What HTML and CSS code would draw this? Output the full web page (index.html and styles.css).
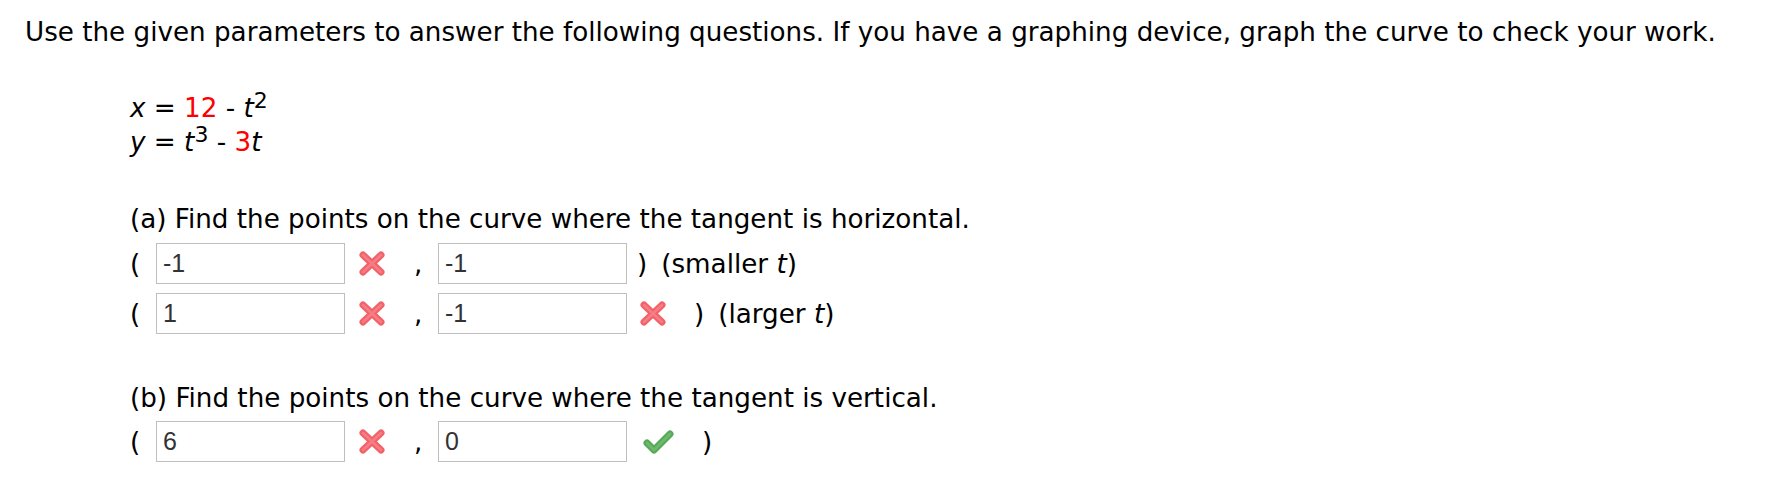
FILE: index.html
```html
<!DOCTYPE html>
<html>
<head>
<meta charset="utf-8">
<link rel="stylesheet" href="styles.css">
</head>
<body>
<div class="page">
  <p class="intro">Use the given parameters to answer the following questions. If you have a graphing device, graph the curve to check your work.</p>
  <div class="eqs">
    <div class="eq"><i>x</i> = <span class="red">12</span> - <i>t</i><sup>2</sup></div>
    <div class="eq"><i>y</i> = <i>t</i><sup>3</sup> - <span class="red">3</span><i>t</i></div>
  </div>

  <div class="part part-a">
    <p class="q">(a) Find the points on the curve where the tangent is horizontal.</p>
    <div class="row">
      <span class="po">(</span>
      <input class="ans" type="text" value="-1" readonly>
      <span class="slot">
        <svg class="ix" viewBox="0 0 28 25" width="28" height="25"><path d="M5 4 L23 21 M23 4 L5 21" stroke="#f2626a" stroke-width="7" stroke-linecap="round" fill="none"/><path d="M5 4 L23 21 M23 4 L5 21" stroke="#f98f95" stroke-width="2.5" stroke-linecap="round" fill="none" opacity="0.6"/></svg>
        <span class="comma">,</span>
      </span>
      <input class="ans" type="text" value="-1" readonly>
      <span class="pc pc-noicon">)</span>
      <span class="tail">(smaller <i>t</i>)</span>
    </div>
    <div class="row">
      <span class="po">(</span>
      <input class="ans" type="text" value="1" readonly>
      <span class="slot">
        <svg class="ix" viewBox="0 0 28 25" width="28" height="25"><path d="M5 4 L23 21 M23 4 L5 21" stroke="#f2626a" stroke-width="7" stroke-linecap="round" fill="none"/><path d="M5 4 L23 21 M23 4 L5 21" stroke="#f98f95" stroke-width="2.5" stroke-linecap="round" fill="none" opacity="0.6"/></svg>
        <span class="comma">,</span>
      </span>
      <input class="ans" type="text" value="-1" readonly>
      <svg class="ix ix2" viewBox="0 0 28 25" width="28" height="25"><path d="M5 4 L23 21 M23 4 L5 21" stroke="#f2626a" stroke-width="7" stroke-linecap="round" fill="none"/><path d="M5 4 L23 21 M23 4 L5 21" stroke="#f98f95" stroke-width="2.5" stroke-linecap="round" fill="none" opacity="0.6"/></svg>
      <span class="pc pc-x">)</span>
      <span class="tail">(larger <i>t</i>)</span>
    </div>
  </div>

  <div class="part part-b">
    <p class="q">(b) Find the points on the curve where the tangent is vertical.</p>
    <div class="row">
      <span class="po">(</span>
      <input class="ans" type="text" value="6" readonly>
      <span class="slot">
        <svg class="ix" viewBox="0 0 28 25" width="28" height="25"><path d="M5 4 L23 21 M23 4 L5 21" stroke="#f2626a" stroke-width="7" stroke-linecap="round" fill="none"/><path d="M5 4 L23 21 M23 4 L5 21" stroke="#f98f95" stroke-width="2.5" stroke-linecap="round" fill="none" opacity="0.6"/></svg>
        <span class="comma">,</span>
      </span>
      <input class="ans" type="text" value="0" readonly>
      <svg class="ick" viewBox="0 0 31 26" width="31" height="26"><path d="M4 14 L11 21 L27 5" stroke="#5aa95a" stroke-width="7" stroke-linecap="round" stroke-linejoin="round" fill="none"/><path d="M4 14 L11 21 L27 5" stroke="#7cc47c" stroke-width="2.5" stroke-linecap="round" stroke-linejoin="round" fill="none" opacity="0.6"/></svg>
      <span class="pc pc-ck">)</span>
    </div>
  </div>
</div>
</body>
</html>
```

FILE: styles.css
```css
html, body {
  margin: 0;
  padding: 0;
  background: #ffffff;
}

.page {
  font-family: "DejaVu Sans", Verdana, sans-serif;
  font-size: 26.2px;
  color: #000;
  padding: 15px 0 0 25px;
}

.intro {
  margin: 0;
  line-height: 34px;
  white-space: nowrap;
}

.eqs {
  margin: 42px 0 0 105px;
}

.eq {
  line-height: 34px;
  height: 34px;
}

.eq sup {
  font-size: 22px;
  vertical-align: 9px;
  line-height: 0;
}

.red {
  color: #ff0000;
}

.part {
  margin-left: 105px;
}

.part-a {
  margin-top: 43px;
}

.part-b {
  margin-top: 47px;
}

.q {
  margin: 0;
  line-height: 34px;
  height: 34px;
}

.part-a .q {
  margin-bottom: 7px;
}

.part-b .q {
  margin-bottom: 6px;
}

.row {
  display: flex;
  align-items: center;
  height: 41px;
  margin-bottom: 9px;
  white-space: nowrap;
}

.po {
  width: 26px;
  flex: none;
}

.ans {
  box-sizing: border-box;
  width: 189px;
  height: 41px;
  margin: 0;
  padding: 0 6px;
  border: 1px solid #bfbfbf;
  border-radius: 0;
  font-family: "Liberation Sans", Arial, sans-serif;
  font-size: 25px;
  color: #333;
  background: #fff;
  outline: none;
  flex: none;
}

.slot {
  display: flex;
  align-items: center;
  width: 93px;
  flex: none;
}

.ix {
  margin-left: 13px;
  flex: none;
}

.comma {
  margin-left: 28px;
}

.ix2 {
  margin-left: 12px;
}

.ick {
  margin-left: 16px;
  flex: none;
}

.pc-noicon {
  margin-left: 10px;
}

.pc-x {
  margin-left: 27px;
}

.pc-ck {
  margin-left: 28px;
}

.tail {
  margin-left: 14px;
}
```
